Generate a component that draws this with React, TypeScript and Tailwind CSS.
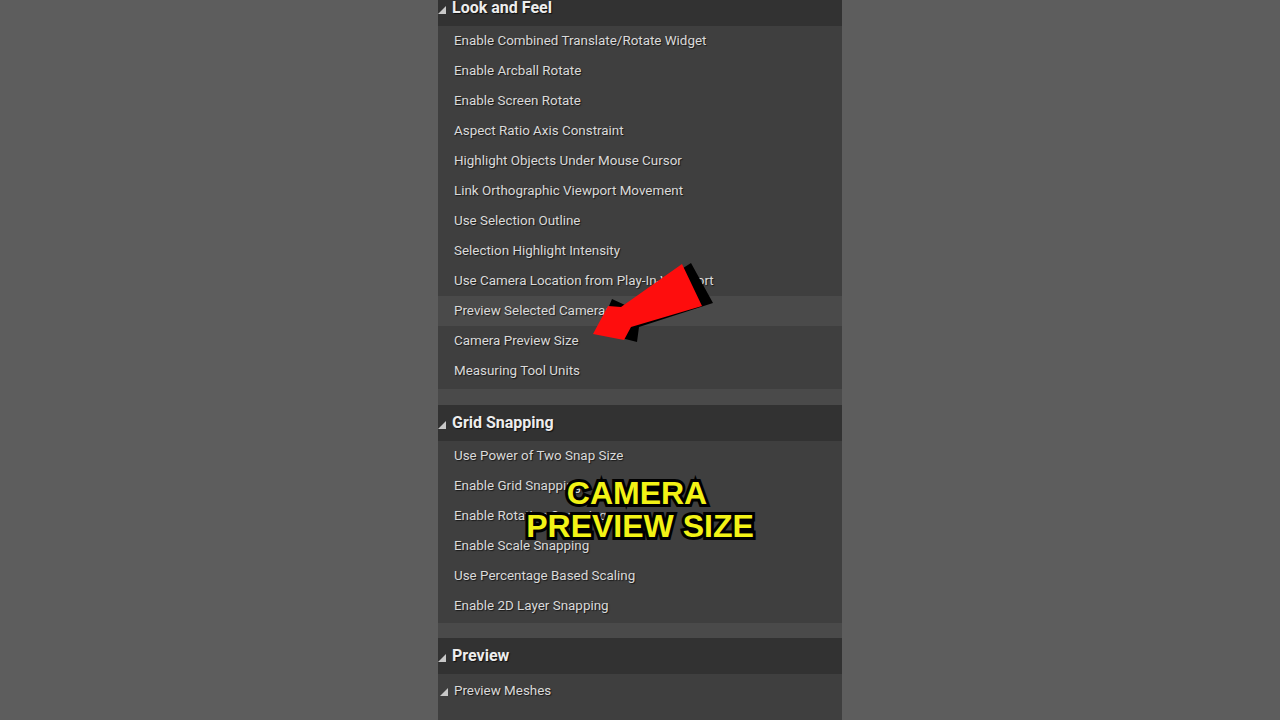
import React from "react";

const lookAndFeel = [
  "Enable Combined Translate/Rotate Widget",
  "Enable Arcball Rotate",
  "Enable Screen Rotate",
  "Aspect Ratio Axis Constraint",
  "Highlight Objects Under Mouse Cursor",
  "Link Orthographic Viewport Movement",
  "Use Selection Outline",
  "Selection Highlight Intensity",
  "Use Camera Location from Play-In-Viewport",
  "Preview Selected Cameras",
  "Camera Preview Size",
  "Measuring Tool Units",
];

const gridSnapping = [
  "Use Power of Two Snap Size",
  "Enable Grid Snapping",
  "Enable Rotation Snapping",
  "Enable Scale Snapping",
  "Use Percentage Based Scaling",
  "Enable 2D Layer Snapping",
];

const Triangle = ({ className = "" }: { className?: string }) => (
  <svg width="8" height="8" viewBox="0 0 8 8" className={className}>
    <polygon points="8,0 8,8 0,8" fill="#c8c8c8" />
  </svg>
);

const Header = ({ title }: { title: string }) => (
  <div className="h-[36px] bg-[#323232] flex items-center">
    <Triangle className="mt-[4px] shrink-0" />
    <span className="ml-[6px] text-[16px] font-bold text-[#ededed] [text-shadow:1px_1px_1px_rgba(0,0,0,0.7)]">
      {title}
    </span>
  </div>
);

const Row = ({ label, active }: { label: string; active?: boolean }) => (
  <div
    className={`h-[30px] flex items-center pl-[16px] text-[13.4px] text-[#dadada] [text-shadow:1px_1px_1px_rgba(0,0,0,0.6)] ${
      active ? "bg-[#4a4a4a]" : ""
    }`}
  >
    {label}
  </div>
);

const App = () => {
  return (
    <div className="relative w-full h-[720px] overflow-hidden bg-[#5d5d5d] font-['Roboto','Liberation_Sans',sans-serif]">
      <div className="flex justify-center">
        <div className="w-[404px] mt-[-10px] bg-[#4a4a4a]">
          <Header title="Look and Feel" />
          <div className="bg-[#3f3f3f] pb-[3px]">
            {lookAndFeel.map((item, i) => (
              <Row key={item} label={item} active={i === 9} />
            ))}
          </div>
          <div className="h-[16px]" />

          <Header title="Grid Snapping" />
          <div className="bg-[#3f3f3f] pb-[2px]">
            {gridSnapping.map((item) => (
              <Row key={item} label={item} />
            ))}
          </div>
          <div className="h-[15px]" />

          <Header title="Preview" />
          <div className="bg-[#3f3f3f] h-[80px]">
            <div className="h-[34px] flex items-center pl-[2px] text-[13.4px] text-[#dadada] [text-shadow:1px_1px_1px_rgba(0,0,0,0.6)]">
              <Triangle className="mt-[2px] shrink-0" />
              <span className="ml-[6px]">Preview Meshes</span>
            </div>
          </div>
        </div>
      </div>

      {/* red arrow overlay */}
      <svg
        className="absolute inset-0 pointer-events-none"
        width="1280"
        height="720"
        viewBox="0 0 1280 720"
      >
        <polygon
          points="598,332 612,299 625,305 691,263 713,303 639,327 637,342"
          fill="#000"
        />
        <polygon
          points="593,334 608,306 621,307 682,264 702,306 631,327 624,340"
          fill="#fe0d0d"
        />
      </svg>

      {/* caption */}
      <div className="absolute left-0 right-0 top-[477px] text-center font-['Liberation_Sans',Arial,sans-serif] font-bold text-[32px] leading-[33px] text-[#f2f215] [-webkit-text-stroke:6px_#000] [paint-order:stroke_fill]">
        <div className="pr-[6px]">CAMERA</div>
        <div>PREVIEW SIZE</div>
      </div>
    </div>
  );
};

export default App;
